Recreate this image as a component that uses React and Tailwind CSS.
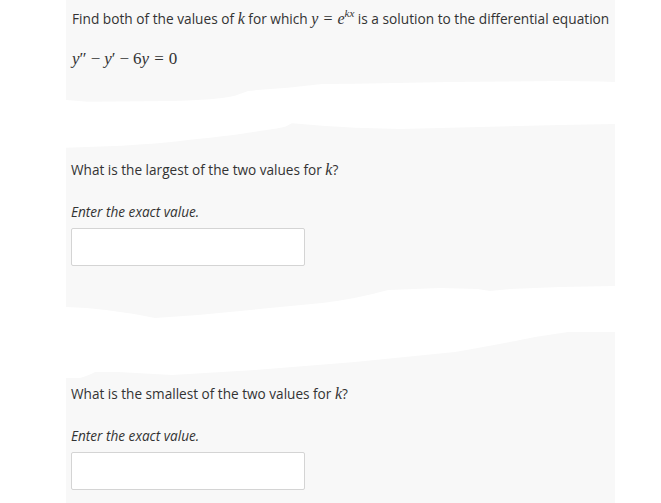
import React from 'react'

const body = { fontFamily: '"Open Sans", "Noto Sans", sans-serif' }
const serif = { fontFamily: '"Liberation Serif", "DejaVu Serif", serif' }

function I({ children, big }) {
  return <span className={big ? 'italic text-[17px]' : 'italic text-[16px]'} style={serif}>{children}</span>
}

function Op({ children, wide, big }) {
  const size = big ? 'text-[17px]' : 'text-[16px]'
  return (
    <span className={wide ? `mx-[5px] ${size}` : `mx-[4px] ${size}`} style={serif}>
      {children}
    </span>
  )
}

function N({ children }) {
  return <span className="text-[17px]" style={serif}>{children}</span>
}

function TearOne() {
  return (
    <svg width="549" height="70" viewBox="0 0 549 70" className="block">
      <path
        fill="#f8f8f8"
        d="M0,0 H549 V2 L534,1.5 L494,1 L384,2 L289,3.7 L256,4 L222,7.7 Q200,9 182,11 L169,15.7 Q150,20 106,21 L22,21.7 L0,20 Z"
      />
      <path
        fill="#f8f8f8"
        d="M0,70 V67.7 L56,65.7 Q100,63 122,60 Q170,55 189,51.7 Q215,48 219,46.7 L226,43.3 L256,45.7 L289,47.7 L334,49 L414,47 L494,45 L549,44 V70 Z"
      />
    </svg>
  )
}

function TearTwo() {
  return (
    <svg width="549" height="95" viewBox="0 0 549 95" className="block">
      <path
        fill="#f8f8f8"
        d="M0,0 H549 V1 L494,2 L444,4 L424,6 L412,4 L374,3 L322,5 Q290,14 256,18 L132,30 L89,33 Q40,23 0,22 Z"
      />
      <path
        fill="#f8f8f8"
        d="M0,95 V93 L14,93 Q24,90 29,87 L52,87 L106,90 L189,85 L289,77 L389,67 Q440,58 469,52 L502,47 L549,47 V95 Z"
      />
    </svg>
  )
}

function Answer({ q }) {
  return (
    <>
      <p className="text-[13.6px] leading-[18px] text-[#333]">
        What is the {q} of the two values for <I>k</I>?
      </p>
      <p className="mt-[24px] text-[13.6px] leading-[18px] italic text-[#333]">Enter the exact value.</p>
      <input
        type="text"
        className="mt-[7px] block w-[234px] h-[38px] bg-white border border-[#d4d4d4] rounded-[2px] outline-none"
      />
    </>
  )
}

export default function App() {
  return (
    <div className="min-h-screen bg-white" style={body}>
      <div className="ml-[66px] w-[549px]">
        <div className="bg-[#f8f8f8] h-[80px] pl-[6px] pt-[10px]">
          <p className="text-[13.7px] leading-[18px] text-[#333] whitespace-nowrap">
            Find both of the values of <I>k</I> for which <I>y</I>
            <Op wide>=</Op>
            <I>e</I>
            <sup className="text-[11px] italic top-[-7px]" style={serif}>kx</sup> is a solution to the differential equation
          </p>
          <p className="mt-[21px] leading-[18px] text-[#333] whitespace-nowrap">
            <I big>y</I>
            <N>″</N>
            <Op big>−</Op>
            <I big>y</I>
            <N>′</N>
            <Op big>−</Op>
            <N>6</N>
            <I big>y</I>
            <Op big wide>=</Op>
            <N>0</N>
          </p>
        </div>
        <TearOne />
        <div className="bg-[#f8f8f8] h-[135px] pl-[5px] pt-[11px]">
          <Answer q="largest" />
        </div>
        <TearTwo />
        <div className="bg-[#f8f8f8] h-[123px] pl-[5px] pt-[5px]">
          <Answer q="smallest" />
        </div>
      </div>
    </div>
  )
}
